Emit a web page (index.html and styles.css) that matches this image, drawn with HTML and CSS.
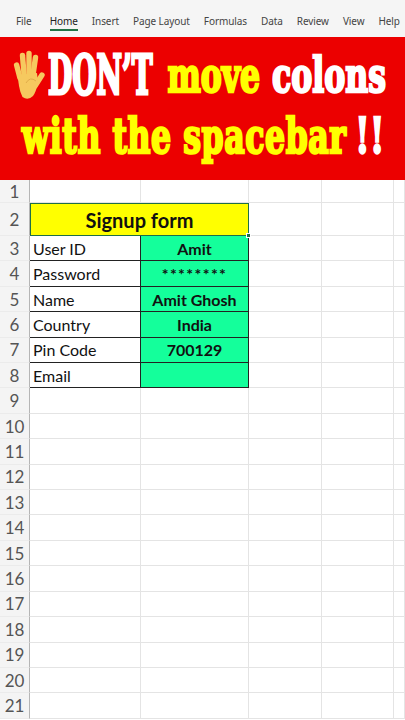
FILE: index.html
```html
<!DOCTYPE html>
<html lang="en">
<head>
    <meta charset="UTF-8">
    <title>Signup form</title>
    <link rel="stylesheet" href="styles.css">
</head>
<body>

<div class="tabs">
    <span class="tab tab-file">File</span>
    <span class="tab tab-home">Home</span>
    <span class="tab">Insert</span>
    <span class="tab">Page Layout</span>
    <span class="tab">Formulas</span>
    <span class="tab">Data</span>
    <span class="tab">Review</span>
    <span class="tab">View</span>
    <span class="tab">Help</span>
</div>

<div class="banner">
    <div class="line line-one">
        <svg class="hand" viewBox="0 0 32 50" aria-hidden="true">
            <g class="fingers">
                <line x1="7" y1="28" x2="3.6" y2="15"/>
                <line x1="11" y1="24" x2="9.5" y2="5.5"/>
                <line x1="16" y1="24" x2="16" y2="3.5"/>
                <line x1="20" y1="25" x2="22.5" y2="7.5"/>
                <line x1="22" y1="36" x2="29" y2="25"/>
            </g>
            <path class="palm" d="M4.5 25 L24 23 L25 33 Q23 42 20 46 Q15 51 9.5 47 Q7 42 6 36 Z"/>
            <path class="crease" d="M13 33 Q17 26 23 31"/>
        </svg>
        <span class="white caps">DON’T</span>
        <span class="yellow big">move</span>
        <span class="white big">colons</span>
    </div>
    <div class="line line-two">
        <span class="yellow big">with the spacebar</span>
        <span class="white big bangs">!!</span>
    </div>
</div>

<div class="sheet">
    <div class="row row-first"><span class="num">1</span><span></span><span></span><span></span><span></span><span></span></div>
    <div class="row row-title"><span class="num">2</span><span class="title-cell">Signup form<i class="handle"></i></span><span></span><span></span><span></span></div>
    <div class="row"><span class="num">3</span><span class="label">User ID</span><span class="value">Amit</span><span></span><span></span><span></span></div>
    <div class="row"><span class="num">4</span><span class="label">Password</span><span class="value stars">********</span><span></span><span></span><span></span></div>
    <div class="row"><span class="num">5</span><span class="label">Name</span><span class="value">Amit Ghosh</span><span></span><span></span><span></span></div>
    <div class="row"><span class="num">6</span><span class="label">Country</span><span class="value">India</span><span></span><span></span><span></span></div>
    <div class="row"><span class="num">7</span><span class="label">Pin Code</span><span class="value">700129</span><span></span><span></span><span></span></div>
    <div class="row"><span class="num">8</span><span class="label">Email</span><span class="value"></span><span></span><span></span><span></span></div>
    <div class="row"><span class="num">9</span><span></span><span></span><span></span><span></span><span></span></div>
    <div class="row"><span class="num">10</span><span></span><span></span><span></span><span></span><span></span></div>
    <div class="row"><span class="num">11</span><span></span><span></span><span></span><span></span><span></span></div>
    <div class="row"><span class="num">12</span><span></span><span></span><span></span><span></span><span></span></div>
    <div class="row"><span class="num">13</span><span></span><span></span><span></span><span></span><span></span></div>
    <div class="row"><span class="num">14</span><span></span><span></span><span></span><span></span><span></span></div>
    <div class="row"><span class="num">15</span><span></span><span></span><span></span><span></span><span></span></div>
    <div class="row"><span class="num">16</span><span></span><span></span><span></span><span></span><span></span></div>
    <div class="row"><span class="num">17</span><span></span><span></span><span></span><span></span><span></span></div>
    <div class="row"><span class="num">18</span><span></span><span></span><span></span><span></span><span></span></div>
    <div class="row"><span class="num">19</span><span></span><span></span><span></span><span></span><span></span></div>
    <div class="row"><span class="num">20</span><span></span><span></span><span></span><span></span><span></span></div>
    <div class="row"><span class="num">21</span><span></span><span></span><span></span><span></span><span></span></div>
</div>

</body>
</html>
```

FILE: styles.css
```css
* {
    box-sizing: border-box;
}
html, body {
    margin: 0;
    height: 720px;
    overflow: hidden;
}
body {
    font-family: Lato, "Noto Sans", sans-serif;
    background-color: white;
}

.tabs {
    height: 37px;
    display: flex;
    justify-content: space-between;
    padding: 14px 5px 0 16px;
    background-color: #f5f5f5;
    font-family: "Noto Sans", sans-serif;
    font-size: 10px;
    letter-spacing: -0.1px;
    color: #444;
}
.tab {
    height: 17px;
    line-height: 15px;
    white-space: nowrap;
}
.tab-file {
    margin-right: 4px;
}
.tab-home {
    color: #222;
    border-bottom: 2px solid #217346;
}

.banner {
    height: 143px;
    background-color: #ec0000;
    font-family: "DejaVu Serif Condensed", "DejaVu Serif", serif;
    font-weight: 700;
    font-size: 35px;
    white-space: nowrap;
}
.line {
    display: flex;
    align-items: center;
}
.big, .caps {
    transform: scaleY(1.4);
    -webkit-text-stroke: 1.8px currentColor;
}
.caps {
    font-size: 31px;
    margin-right: 3px;
    transform: scaleY(1.75);
}
.line-one {
    height: 73px;
    padding: 2px 0 0 13px;
    gap: 12px;
}
.line-two {
    height: 62px;
    padding: 0 0 12px 22px;
    gap: 9px;
    letter-spacing: 0.6px;
}
.bangs {
    letter-spacing: 1px;
}
.white {
    color: #fff;
}
.yellow {
    color: #ffff00;
}
.hand {
    width: 32px;
    height: 50px;
    flex: none;
    margin-right: -9px;
}
.fingers line {
    stroke: #f6c95f;
    stroke-width: 5.4;
    stroke-linecap: round;
}
.palm {
    fill: #f6c95f;
}
.crease {
    fill: none;
    stroke: #dba545;
    stroke-width: 0.8;
}

.row {
    display: grid;
    grid-template-columns: 30px 111px 108px 73px 72px 11px;
    height: 25.42px;
    font-size: 16px;
    color: #111;
}
.row-first {
    height: 23px;
}
.row-title {
    height: 33px;
    grid-template-columns: 30px 219px 73px 72px 11px;
}
.row > span {
    display: flex;
    align-items: center;
    border-right: 1px solid #e4e4e4;
    border-bottom: 1px solid #e4e4e4;
}
.row > .num {
    justify-content: center;
    font-size: 17px;
    color: #555;
    background-color: #f4f4f4;
    border-right: 1px solid #b5b5b5;
    border-bottom: 1px solid #ebebeb;
}
.row > .title-cell {
    position: relative;
    justify-content: center;
    font-size: 20px;
    font-weight: 700;
    color: #111;
    background-color: #ffff00;
    border: 1px solid #1f6f47;
}
.handle {
    position: absolute;
    right: -3px;
    bottom: -3px;
    width: 5px;
    height: 5px;
    background-color: #1f6f47;
    border: 1px solid #fff;
}
.row > .label {
    padding-left: 3px;
    border-right: 1px solid #222;
    border-bottom: 1px solid #222;
}
.row > .value {
    justify-content: center;
    font-weight: 700;
    font-size: 16px;
    background-color: #14ff9b;
    border-right: 1px solid #222;
    border-bottom: 1px solid #222;
}
.row > .stars {
    letter-spacing: 1.4px;
}
```
